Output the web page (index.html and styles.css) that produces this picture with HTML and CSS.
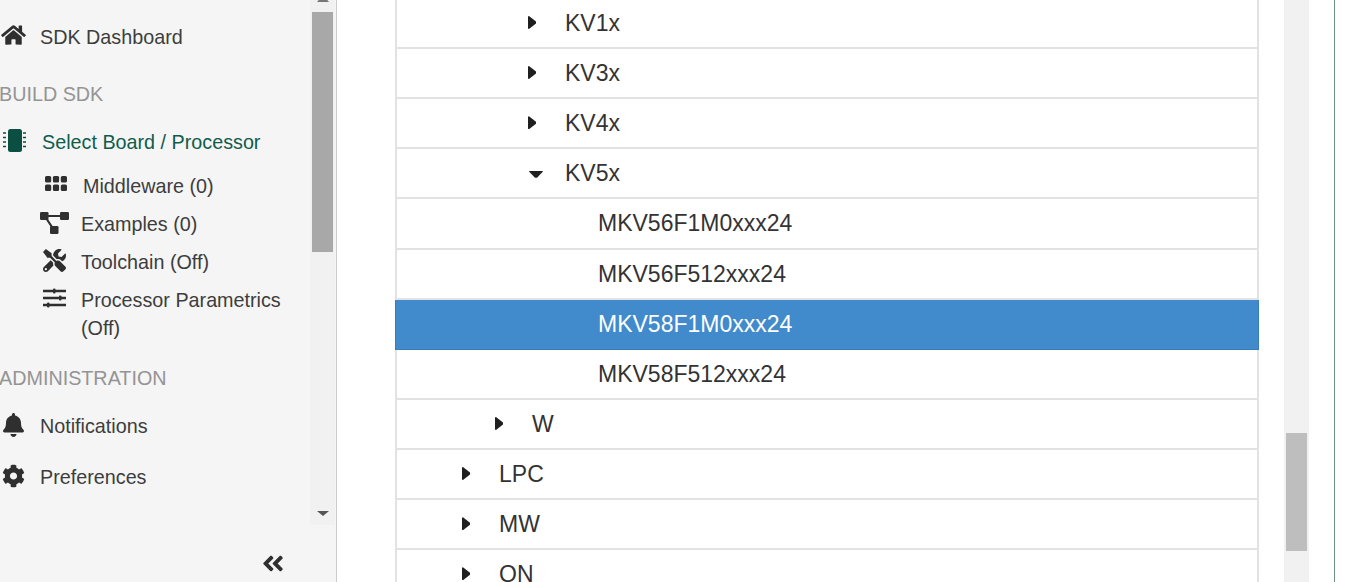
FILE: index.html
```html
<!DOCTYPE html>
<html lang="en">
<head>
<meta charset="utf-8">
<title>SDK Builder</title>
<link rel="stylesheet" href="styles.css">
</head>
<body>
<div class="app">
  <aside class="sidebar">
    <div class="side-top">
      <nav class="nav">
        <a class="item item-dash">
          <svg class="ic ic-home" viewBox="0 0 576 512"><path d="M280.37 148.26L96 300.11V464a16 16 0 0 0 16 16l112.06-.29a16 16 0 0 0 15.92-16V368a16 16 0 0 1 16-16h64a16 16 0 0 1 16 16v95.64a16 16 0 0 0 16 16.05L464 480a16 16 0 0 0 16-16V300L295.67 148.26a12.19 12.19 0 0 0-15.3 0zM571.6 251.47L488 182.56V44.05a12 12 0 0 0-12-12h-56a12 12 0 0 0-12 12v72.61L318.47 43a48 48 0 0 0-61 0L4.34 251.47a12 12 0 0 0-1.6 16.9l25.5 31A12 12 0 0 0 45.15 301l235.22-193.74a12.19 12.19 0 0 1 15.3 0L530.9 301a12 12 0 0 0 16.9-1.6l25.5-31a12 12 0 0 0-1.7-16.93z"/></svg>
          <span>SDK Dashboard</span>
        </a>
        <div class="heading heading-build">BUILD SDK</div>
        <a class="item item-active">
          <svg class="ic ic-chip" viewBox="0 0 23 23"><rect x="5" y="0" width="14" height="23" rx="2.5"/><path class="pins" d="M0 4h3M0 8.500h3M0 13h3M0 17.500h3M20 4h3M20 8.500h3M20 13h3M20 17.500h3"/></svg>
          <span>Select Board / Processor</span>
        </a>
        <a class="item sub sub-first">
          <svg class="ic ic-grid" viewBox="0 0 22 15"><rect x="0" y="0" width="6.200" height="6.500" rx="1.500"/><rect x="7.900" y="0" width="6.200" height="6.500" rx="1.500"/><rect x="15.800" y="0" width="6.200" height="6.500" rx="1.500"/><rect x="0" y="8.500" width="6.200" height="6.500" rx="1.500"/><rect x="7.900" y="8.500" width="6.200" height="6.500" rx="1.500"/><rect x="15.800" y="8.500" width="6.200" height="6.500" rx="1.500"/></svg>
          <span>Middleware (0)</span>
        </a>
        <a class="item sub">
          <svg class="ic ic-net" viewBox="0 0 29 22"><rect x="0" y="0" width="8.500" height="8" rx="1.200"/><rect x="20" y="0" width="9" height="8" rx="1.200"/><rect x="10" y="14" width="8.500" height="8" rx="1.200"/><path class="net-line" d="M6 4h16M6 6l6 9"/></svg>
          <span>Examples (0)</span>
        </a>
        <a class="item sub">
          <svg class="ic ic-tools" viewBox="0 0 512 512"><path d="M501.1 395.700L384 278.600c-23.100-23.100-57.600-27.600-85.400-13.900L192 158.100V96L64 0 0 64l96 128h62.100l106.600 106.600c-13.600 27.800-9.200 62.300 13.900 85.400l117.100 117.100c14.600 14.600 38.200 14.600 52.700 0l52.700-52.700c14.500-14.600 14.500-38.200 0-52.700zM331.700 225c28.300 0 54.900 11 74.900 31l19.400 19.400c15.800-6.900 30.800-16.500 43.800-29.500 37.100-37.100 49.700-89.300 37.900-136.700-2.200-9-13.500-12.100-20.100-5.500l-74.400 74.400-67.900-11.300L334 98.900l74.400-74.400c6.600-6.600 3.400-17.900-5.700-20.200-47.400-11.700-99.600.9-136.600 37.900-28.500 28.500-41.900 66.100-41.200 103.600l82.100 82.100c8.100-1.900 16.500-2.900 24.700-2.900zm-103.900 82l-56.700-56.700L18.700 402.800c-25 25-25 65.500 0 90.500s65.500 25 90.500 0l123.600-123.600c-7.600-19.900-9.900-41.600-5-62.700zM64 472c-13.200 0-24-10.800-24-24 0-13.300 10.700-24 24-24s24 10.700 24 24c0 13.200-10.700 24-24 24z"/></svg>
          <span>Toolchain (Off)</span>
        </a>
        <a class="item sub sub-wrap">
          <svg class="ic ic-sliders" viewBox="0 0 23 20"><path class="slide-line" d="M0 3h23M0 10h23M0 17h23"/><rect x="10" y="0.500" width="2.500" height="5" rx="1"/><rect x="16" y="7.500" width="2.500" height="5" rx="1"/><rect x="4" y="14.500" width="2.500" height="5" rx="1"/></svg>
          <span>Processor Parametrics (Off)</span>
        </a>
        <div class="heading heading-admin">ADMINISTRATION</div>
        <a class="item item-notif">
          <svg class="ic ic-bell" viewBox="0 0 448 512"><path d="M224 512c35.320 0 63.970-28.650 63.970-64H160.030c0 35.350 28.650 64 63.970 64zm215.390-149.710c-19.320-20.760-55.470-51.990-55.470-154.290 0-77.700-54.480-139.900-127.940-155.160V32c0-17.670-14.320-32-31.980-32s-31.980 14.330-31.980 32v20.840C118.560 68.100 64.080 130.300 64.080 208c0 102.300-36.150 133.530-55.470 154.290-6 6.450-8.660 14.160-8.610 21.710.11 16.400 12.980 32 32.100 32h383.800c19.120 0 32-15.600 32.100-32 .05-7.550-2.610-15.270-8.610-21.710z"/></svg>
          <span>Notifications</span>
        </a>
        <a class="item item-pref">
          <svg class="ic ic-cog" viewBox="0 0 512 512"><path d="M487.400 315.700l-42.600-24.600c4.300-23.200 4.300-47 0-70.200l42.600-24.600c4.900-2.800 7.100-8.600 5.500-14-11.100-35.600-30-67.800-54.700-94.600-3.800-4.100-10-5.100-14.800-2.300L380.800 110c-17.900-15.400-38.500-27.300-60.800-35.100V25.800c0-5.600-3.900-10.500-9.400-11.700-36.700-8.200-74.300-7.800-109.200 0-5.500 1.200-9.400 6.100-9.400 11.700V75c-22.200 7.900-42.800 19.800-60.800 35.100L88.700 85.500c-4.900-2.800-11-1.900-14.800 2.300-24.700 26.700-43.600 58.900-54.700 94.600-1.700 5.400.6 11.200 5.500 14L67.300 221c-4.300 23.200-4.300 47 0 70.200l-42.600 24.600c-4.900 2.800-7.100 8.600-5.500 14 11.100 35.600 30 67.800 54.700 94.600 3.800 4.100 10 5.100 14.800 2.300l42.600-24.600c17.900 15.400 38.500 27.300 60.800 35.100v49.200c0 5.600 3.900 10.500 9.400 11.700 36.700 8.200 74.300 7.800 109.200 0 5.500-1.200 9.400-6.100 9.400-11.700v-49.200c22.200-7.900 42.800-19.800 60.800-35.100l42.600 24.600c4.900 2.800 11 1.900 14.800-2.300 24.700-26.700 43.600-58.900 54.700-94.600 1.500-5.500-.7-11.300-5.600-14.100zM256 336c-44.100 0-80-35.900-80-80s35.900-80 80-80 80 35.900 80 80-35.900 80-80 80z"/></svg>
          <span>Preferences</span>
        </a>
      </nav>
      <div class="side-scroll">
        <div class="arrow-up"></div>
        <div class="side-thumb"></div>
        <div class="arrow-down"></div>
      </div>
    </div>
    <div class="side-foot">
      <svg class="ic-collapse" viewBox="0 0 448 512"><path d="M223.700 239l136-136c9.400-9.400 24.600-9.400 33.900 0l22.600 22.600c9.400 9.400 9.400 24.600 0 33.900L319.900 256l96.400 96.400c9.400 9.400 9.400 24.600 0 33.900L393.700 409c-9.400 9.400-24.600 9.400-33.900 0l-136-136c-9.500-9.400-9.500-24.600-.1-34zm-192 34l136 136c9.400 9.400 24.600 9.400 33.900 0l22.600-22.600c9.400-9.400 9.400-24.600 0-33.900L127.900 256l96.400-96.400c9.400-9.400 9.400-24.600 0-33.900L201.700 103c-9.400-9.400-24.600-9.400-33.900 0l-136 136c-9.500 9.400-9.500 24.600-.1 34z"/></svg>
    </div>
  </aside>
  <main class="main">
    <ul class="tree">
      <li class="row lvl-2"><i class="tri tri-right"></i><span>KV1x</span></li>
      <li class="row lvl-2"><i class="tri tri-right"></i><span>KV3x</span></li>
      <li class="row lvl-2"><i class="tri tri-right"></i><span>KV4x</span></li>
      <li class="row lvl-2"><i class="tri tri-down"></i><span>KV5x</span></li>
      <li class="row leaf"><span>MKV56F1M0xxx24</span></li>
      <li class="row leaf"><span>MKV56F512xxx24</span></li>
      <li class="row leaf selected"><span>MKV58F1M0xxx24</span></li>
      <li class="row leaf"><span>MKV58F512xxx24</span></li>
      <li class="row lvl-1"><i class="tri tri-right"></i><span>W</span></li>
      <li class="row lvl-0"><i class="tri tri-right"></i><span>LPC</span></li>
      <li class="row lvl-0"><i class="tri tri-right"></i><span>MW</span></li>
      <li class="row lvl-0"><i class="tri tri-right"></i><span>QN</span></li>
    </ul>
    <div class="main-scroll"><div class="main-thumb"></div></div>
    <div class="edge"></div>
  </main>
</div>
</body>
</html>
```
FILE: styles.css
```css
* { box-sizing: border-box; }
html, body { margin: 0; padding: 0; height: 100%; overflow: hidden; background: #fff; }
body { font-family: "Liberation Sans", Arial, sans-serif; color: #333; }
ul { list-style: none; margin: 0; padding: 0; }

.app { display: flex; height: 582px; overflow: hidden; }

/* Sidebar */
.sidebar {
  width: 337px; flex: none; height: 582px;
  background: #f5f5f5; border-right: 1px solid #ccc;
  display: flex; flex-direction: column;
  font-size: 19.750px;
}
.side-top { display: flex; height: 525px; flex: none; }
.nav { width: 310px; flex: none; padding-top: 23px; }
.item { display: flex; align-items: center; height: 28px; line-height: 28px; color: #3d3d3d; }
.ic { flex: none; display: block; fill: #2f2f2f; }
.heading { height: 28px; line-height: 28px; color: #949494; margin-left: -1px; }
.heading-build { margin-top: 29px; }
.heading-admin { margin-top: 22px; }

.item-dash { padding-left: 1px; }
.ic-home { width: 25px; height: 22px; margin-right: 14px; margin-top: -4px; }

.item-active { margin-top: 20px; padding-left: 3px; color: #0f5c4d; }
.ic-chip { width: 23px; height: 23px; margin-right: 16px; margin-top: -3px; fill: #0b4f42; }
.pins { stroke: #0b4f42; stroke-width: 1.500; fill: none; }

.sub { margin-top: 10px; padding-left: 40px; }
.sub-first { margin-top: 16px; padding-left: 45px; }
.ic-grid { width: 22px; height: 15px; margin-right: 16px; margin-top: -5px; }
.ic-net { width: 29px; height: 22px; margin-right: 12px; margin-top: -3px; }
.net-line { stroke: #2f2f2f; stroke-width: 2.200; fill: none; }
.ic-tools { width: 23px; height: 23px; margin: -3px 15px 0 3px; }
.ic-sliders { width: 23px; height: 20px; margin: 2px 15px 0 3px; }
.slide-line { stroke: #2f2f2f; stroke-width: 2.400; fill: none; }
.sub-wrap { height: 56px; align-items: flex-start; }

.item-notif { margin-top: 20px; padding-left: 3px; }
.ic-bell { width: 21px; height: 24px; margin-right: 16px; margin-top: -3px; }
.item-pref { margin-top: 23px; padding-left: 2px; }
.ic-cog { width: 23px; height: 24px; margin-right: 15px; margin-top: -3px; }

.side-scroll {
  width: 25px; flex: none; height: 525px;
  background: #f1f1f1; padding: 0 2px;
  display: flex; flex-direction: column; align-items: center;
}
.arrow-up {
  width: 0; height: 0; margin-top: -5px; margin-bottom: 10px;
  border-left: 6px solid transparent; border-right: 6px solid transparent;
  border-bottom: 7px solid #777; flex: none;
}
.side-thumb { width: 21px; height: 240px; background: #a8a8a8; flex: none; }
.arrow-down {
  width: 0; height: 0; margin-top: 259px;
  border-left: 6px solid transparent; border-right: 6px solid transparent;
  border-top: 5px solid #555; flex: none;
}
.side-foot { flex: 1; display: flex; justify-content: flex-end; padding: 26px 52px 0 0; }
.ic-collapse { display: block; width: 22px; height: 25px; fill: #2f2f2f; }

/* Main */
.main { flex: 1; display: flex; align-items: flex-start; padding-left: 58px; min-width: 0; height: 582px; overflow: hidden; }
.tree {
  width: 864px; flex: none; margin-top: -1.140px;
  border-left: 2px solid #e2e2e2; border-right: 2px solid #e2e2e2;
  font-size: 23px; color: #333;
}
.row {
  display: flex; align-items: center;
  height: 50.140px; padding-top: 1px; border-bottom: 2px solid #e2e2e2;
}
.lvl-0 { padding-left: 65px; }
.lvl-1 { padding-left: 98px; }
.lvl-2 { padding-left: 131px; }
.leaf { padding-left: 201px; }
.tri { display: block; width: 37px; flex: none; }
.tri::before { content: ""; display: block; background: #1f1f1f; }
.tri-right::before {
  width: 8px; height: 13px; margin-top: -2px;
  clip-path: polygon(0 4%, 12% 0, 100% 42%, 100% 58%, 12% 100%, 0 96%);
}
.tri-down::before {
  width: 14px; height: 7px; margin: 1px 0 0 1px;
  clip-path: polygon(0 10%, 5% 0, 95% 0, 100% 10%, 57% 100%, 43% 100%);
}
.selected {
  background: #418acb; color: #fff;
  border: 1px solid #3a7cb8; border-top: 0; border-bottom-width: 1px;
  margin: 0 -2px; padding-left: 202px;
}

.main-scroll {
  width: 25px; height: 582px; flex: none; margin-left: 25px;
  background: #f1f1f1; padding: 433px 2px 0;
}
.main-thumb { width: 21px; height: 118px; background: #bebebe; }
.edge { width: 1px; height: 582px; flex: none; margin-left: 25px; background: #6f8f88; }
```
